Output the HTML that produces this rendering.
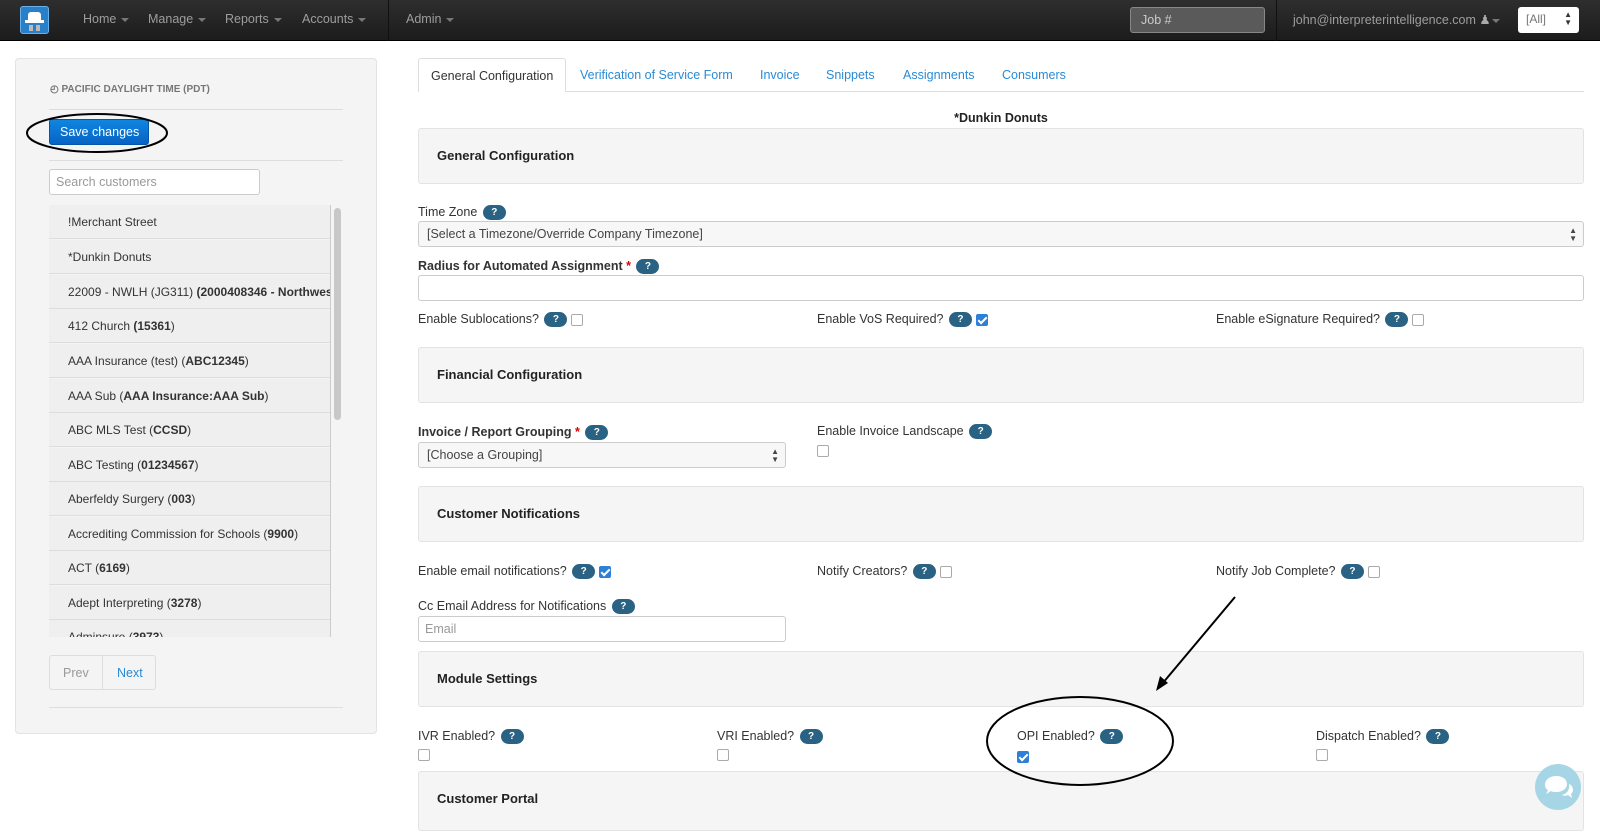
<!DOCTYPE html>
<html><head><meta charset="utf-8"><style>
*{box-sizing:border-box}
body{margin:0;width:1600px;height:832px;overflow:hidden;background:#fff;font-family:"Liberation Sans",Arial,sans-serif;font-size:12.5px;color:#333;position:relative}
.abs{position:absolute}
.nav{left:0;top:0;width:1600px;height:41px;background:linear-gradient(#2e2e2e,#1c1c1c);border-bottom:1px solid #000}
.nav .it{position:absolute;top:12px;color:#9d9d9d;font-size:12.5px}
.car{display:inline-block;width:0;height:0;border-left:4px solid transparent;border-right:4px solid transparent;border-top:4px solid #777;vertical-align:middle;margin-left:5px}
.panel{background:#f4f4f4;border:1px solid #e3e3e3;border-radius:4px}
.hdr{background:#f5f5f5;border:1px solid #e3e3e3;border-radius:3px;left:418px;width:1166px;height:56px;font-weight:bold;font-size:13px;color:#222;padding:19px 0 0 18px}
.q{display:inline-block;background:#2a6284;color:#fff;font-weight:bold;font-size:10px;border-radius:9px;width:23px;height:15px;line-height:15px;text-align:center;vertical-align:middle;margin-left:2px}
.cb{display:inline-block;width:12px;height:12px;border:1px solid #aaa;border-radius:2px;background:#fff;vertical-align:middle;margin-left:4px}
.cb.on{background:#2d7fd8;border-color:#2d7fd8;position:relative}
.cb.on:after{content:"";position:absolute;left:3px;top:0px;width:3px;height:7px;border:solid #fff;border-width:0 2px 2px 0;transform:rotate(45deg)}
.inp{border:1px solid #ccc;border-radius:3px;background:#fff}
.sel{border:1px solid #ccc;border-radius:3px;background:#f7f7f7;padding:5px 8px;color:#444}
.lbl{font-size:12.5px;color:#333}
.row{left:49px;width:281px;height:34px;background:#efefef;border-bottom:1px solid #ddd;padding:10px 0 0 19px;white-space:nowrap;overflow:hidden;font-size:12px;color:#333}
.tab{top:58px;color:#2a8ad4;font-size:12.5px}
</style></head><body>
<div class="abs nav">
 <div class="abs" style="left:20px;top:6px;width:29px;height:28px;background:#2a7fc9;border:1px solid #6ab0e8;border-radius:3px">
  <div class="abs" style="left:7px;top:5px;width:13px;height:9px;background:#fff;border-radius:3px 3px 0 0"></div>
  <div class="abs" style="left:4px;top:13px;width:19px;height:3px;background:#fff"></div>
  <div class="abs" style="left:8px;top:18px;width:4px;height:6px;background:#bbb"></div>
  <div class="abs" style="left:15px;top:18px;width:4px;height:6px;background:#bbb"></div>
 </div>
 <span class="it" style="left:83px">Home<span class="car"></span></span>
 <span class="it" style="left:148px">Manage<span class="car"></span></span>
 <span class="it" style="left:225px">Reports<span class="car"></span></span>
 <span class="it" style="left:302px">Accounts<span class="car"></span></span>
 <div class="abs" style="left:388px;top:0;width:1px;height:41px;background:#111"></div>
 <span class="it" style="left:406px">Admin<span class="car"></span></span>
 <div class="abs" style="left:1130px;top:7px;width:135px;height:26px;background:#5a5a5a;border:1px solid #888;border-radius:3px;color:#ccc;padding:5px 10px">Job #</div>
 <div class="abs" style="left:1276px;top:0;width:1px;height:41px;background:#111"></div>
 <span class="it" style="left:1293px">john@interpreterintelligence.com <span style="color:#aaa">&#9823;</span><span class="car" style="margin-left:1px"></span></span>
 <div class="abs" style="left:1518px;top:7px;width:61px;height:26px;background:#fff;border-radius:3px;color:#777;padding:5px 8px;font-size:12px">[All]<span style="position:absolute;right:7px;top:4px;font-size:8px;line-height:8px;color:#333">▲<br>▼</span></div>
</div>

<div class="abs panel" style="left:15px;top:58px;width:362px;height:676px"></div>
<div class="abs" style="left:50px;top:84px;font-size:10px;font-weight:bold;color:#777">&#9716; PACIFIC DAYLIGHT TIME (PDT)</div>
<div class="abs" style="left:49px;top:109px;width:294px;height:1px;background:#ddd"></div>
<div class="abs" style="left:49px;top:119px;width:100px;height:26px;background:linear-gradient(#0f86e0,#0663c4);border:1px solid #0556ab;border-radius:3px;color:#fff;padding:5px 0 0 10px;font-size:12.5px">Save changes</div>
<div class="abs" style="left:49px;top:160px;width:294px;height:1px;background:#ddd"></div>
<div class="abs inp" style="left:49px;top:169px;width:211px;height:26px;color:#999;padding:5px 6px">Search customers</div>
<div class="abs" style="left:49px;top:205px;width:281px;height:432px;overflow:hidden">
 <div class="abs row" style="left:0;top:0">!Merchant Street</div>
 <div class="abs row" style="left:0;top:35px">*Dunkin Donuts</div>
 <div class="abs row" style="left:0;top:70px">22009 - NWLH (JG311) <b>(2000408346 - Northwest</b></div>
 <div class="abs row" style="left:0;top:104px">412 Church <b>(15361</b>)</div>
 <div class="abs row" style="left:0;top:139px">AAA Insurance (test) (<b>ABC12345</b>)</div>
 <div class="abs row" style="left:0;top:174px">AAA Sub (<b>AAA Insurance:AAA Sub</b>)</div>
 <div class="abs row" style="left:0;top:208px">ABC MLS Test (<b>CCSD</b>)</div>
 <div class="abs row" style="left:0;top:243px">ABC Testing (<b>01234567</b>)</div>
 <div class="abs row" style="left:0;top:277px">Aberfeldy Surgery (<b>003</b>)</div>
 <div class="abs row" style="left:0;top:312px">Accrediting Commission for Schools (<b>9900</b>)</div>
 <div class="abs row" style="left:0;top:346px">ACT (<b>6169</b>)</div>
 <div class="abs row" style="left:0;top:381px">Adept Interpreting (<b>3278</b>)</div>
 <div class="abs row" style="left:0;top:415px">Adminsure (<b>3973</b>)</div>
</div>
<div class="abs" style="left:330px;top:205px;width:1px;height:432px;background:#ccc"></div>
<div class="abs" style="left:334px;top:208px;width:7px;height:212px;background:#c8c8c8;border-radius:4px"></div>
<div class="abs" style="left:49px;top:655px;width:107px;height:35px;border:1px solid #ddd;border-radius:3px;background:#f4f4f4">
 <span class="abs" style="left:13px;top:10px;color:#999">Prev</span>
 <div class="abs" style="left:52px;top:0;width:1px;height:33px;background:#ddd"></div>
 <span class="abs" style="left:67px;top:10px;color:#2a8ad4">Next</span>
</div>
<div class="abs" style="left:49px;top:707px;width:294px;height:1px;background:#ddd"></div>

<div class="abs" style="left:418px;top:91px;width:1166px;height:1px;background:#ddd"></div>
<div class="abs" style="left:418px;top:58px;width:148px;height:34px;background:#fff;border:1px solid #ddd;border-bottom:none;border-radius:3px 3px 0 0;padding:10px 0 0 12px">General Configuration</div>
<span class="abs tab" style="left:580px;top:68px">Verification of Service Form</span>
<span class="abs tab" style="left:760px;top:68px">Invoice</span>
<span class="abs tab" style="left:826px;top:68px">Snippets</span>
<span class="abs tab" style="left:903px;top:68px">Assignments</span>
<span class="abs tab" style="left:1002px;top:68px">Consumers</span>

<div class="abs" style="left:418px;top:111px;width:1166px;text-align:center;font-weight:bold;color:#222">*Dunkin Donuts</div>
<div class="abs hdr" style="top:128px">General Configuration</div>
<div class="abs lbl" style="left:418px;top:205px">Time Zone <span class="q">?</span></div>
<div class="abs sel" style="left:418px;top:221px;width:1166px;height:26px">[Select a Timezone/Override Company Timezone]<span style="position:absolute;right:6px;top:5px;font-size:8px;line-height:8px">▲<br>▼</span></div>
<div class="abs lbl" style="left:418px;top:259px;font-weight:bold">Radius for Automated Assignment <span style="color:#d00">*</span> <span class="q">?</span></div>
<div class="abs inp" style="left:418px;top:275px;width:1166px;height:26px"></div>
<div class="abs lbl" style="left:418px;top:312px">Enable Sublocations? <span class="q">?</span><span class="cb"></span></div>
<div class="abs lbl" style="left:817px;top:312px">Enable VoS Required? <span class="q">?</span><span class="cb on"></span></div>
<div class="abs lbl" style="left:1216px;top:312px">Enable eSignature Required? <span class="q">?</span><span class="cb"></span></div>

<div class="abs hdr" style="top:347px">Financial Configuration</div>
<div class="abs lbl" style="left:418px;top:425px;font-weight:bold">Invoice / Report Grouping <span style="color:#d00">*</span> <span class="q">?</span></div>
<div class="abs lbl" style="left:817px;top:424px">Enable Invoice Landscape <span class="q">?</span></div>
<div class="abs sel" style="left:418px;top:442px;width:368px;height:26px">[Choose a Grouping]<span style="position:absolute;right:6px;top:5px;font-size:8px;line-height:8px">▲<br>▼</span></div>
<div class="abs cb" style="left:813px;top:445px"></div>

<div class="abs hdr" style="top:486px">Customer Notifications</div>
<div class="abs lbl" style="left:418px;top:564px">Enable email notifications? <span class="q">?</span><span class="cb on"></span></div>
<div class="abs lbl" style="left:817px;top:564px">Notify Creators? <span class="q">?</span><span class="cb"></span></div>
<div class="abs lbl" style="left:1216px;top:564px">Notify Job Complete? <span class="q">?</span><span class="cb"></span></div>
<div class="abs lbl" style="left:418px;top:599px">Cc Email Address for Notifications <span class="q">?</span></div>
<div class="abs inp" style="left:418px;top:616px;width:368px;height:26px;color:#999;padding:5px 6px">Email</div>

<div class="abs hdr" style="top:651px">Module Settings</div>
<div class="abs lbl" style="left:418px;top:729px">IVR Enabled? <span class="q">?</span></div>
<div class="abs lbl" style="left:717px;top:729px">VRI Enabled? <span class="q">?</span></div>
<div class="abs lbl" style="left:1017px;top:729px">OPI Enabled? <span class="q">?</span></div>
<div class="abs lbl" style="left:1316px;top:729px">Dispatch Enabled? <span class="q">?</span></div>
<div class="abs cb" style="left:414px;top:749px"></div>
<div class="abs cb" style="left:713px;top:749px"></div>
<div class="abs cb on" style="left:1013px;top:749px"></div>
<div class="abs cb" style="left:1312px;top:749px"></div>

<div class="abs hdr" style="top:771px;height:60px">Customer Portal</div>
<div class="abs" style="left:1535px;top:764px;width:46px;height:46px;border-radius:50%;background:#a6d6e6"></div>
<svg class="abs" style="left:1542px;top:774px" width="32" height="26" viewBox="0 0 32 26"><path d="M3 11 C3 5 9 2 14 2 C20 2 25 5 25 10 C25 15 20 18 14 18 C12 18 10 18 9 17 L4 20 L6 16 C4 15 3 13 3 11Z" fill="#fff"/><path d="M27 10 C30 11 31 14 31 16 C31 18 30 19 29 20 L30 24 L26 21 C24 22 22 22 20 21 C24 20 27 17 27 13Z" fill="#fff"/></svg>

<svg class="abs" style="left:0;top:0;z-index:5" width="1600" height="832">
 <ellipse cx="97" cy="133" rx="70" ry="19" fill="none" stroke="#000" stroke-width="2"/>
 <ellipse cx="1080" cy="741" rx="93" ry="44" fill="none" stroke="#000" stroke-width="2"/>
 <line x1="1235" y1="597" x2="1162" y2="684" stroke="#000" stroke-width="2"/>
 <polygon points="1156,691 1160,676 1168,683" fill="#000"/>
</svg>
</body></html>
